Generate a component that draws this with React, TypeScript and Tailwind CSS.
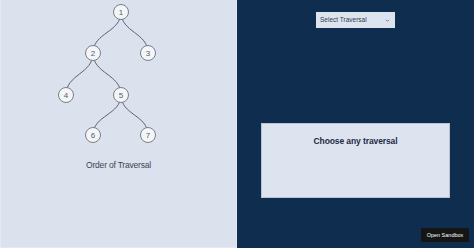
const nodes = [
  { id: 1, x: 121, y: 12 },
  { id: 2, x: 93, y: 53 },
  { id: 3, x: 148, y: 53 },
  { id: 4, x: 66, y: 95 },
  { id: 5, x: 121, y: 95 },
  { id: 6, x: 93, y: 135 },
  { id: 7, x: 148, y: 135 },
];

const links = [
  [1, 2],
  [1, 3],
  [2, 4],
  [2, 5],
  [5, 6],
  [5, 7],
];

const pos = (id: number) => nodes.find((n) => n.id === id)!;

// vertical diagonal link, like react-d3-tree
const diagonal = (a: number, b: number) => {
  const s = pos(a);
  const t = pos(b);
  const my = (s.y + t.y) / 2;
  return `M${s.x},${s.y} C${s.x},${my} ${t.x},${my} ${t.x},${t.y}`;
};

const Tree = () => (
  <svg width="237" height="146" className="block">
    {links.map(([a, b]) => (
      <path key={`${a}-${b}`} d={diagonal(a, b)} fill="none" stroke="#5a6272" strokeWidth="1" />
    ))}
    {nodes.map((n) => (
      <g key={n.id}>
        <circle cx={n.x} cy={n.y} r="7.5" fill="#f4f5f8" stroke="#7a7f88" strokeWidth="1" />
        <text
          x={n.x}
          y={n.y + 2.8}
          textAnchor="middle"
          fontSize="8"
          fill="#555b66"
          fontFamily="Liberation Sans, Arial, sans-serif"
        >
          {n.id}
        </text>
      </g>
    ))}
  </svg>
);

export default function App() {
  return (
    <div className="flex h-[248px] w-[474px] font-['Liberation_Sans',Arial,sans-serif]">
      <div className="w-[237px] bg-[#dbe2ee] border-x border-b border-[#e3e9f4] flex flex-col items-center">
        <Tree />
        <p className="mt-[13px] text-[8.5px] tracking-[-0.2px] text-[#3d4456]">Order of Traversal</p>
      </div>

      <div className="relative flex-1 bg-[#0f2d4f] flex flex-col items-center">
        <div className="mt-[12px] w-[79px] h-[16px] bg-[#dde4f0] flex items-center justify-between pl-[4px] pr-[5px]">
          <span className="text-[6.5px] text-[#333a48]">Select Traversal</span>
          <svg width="5" height="5" viewBox="0 0 10 10">
            <path d="M2 3.5 L5 6.5 L8 3.5" fill="none" stroke="#555" strokeWidth="1.4" />
          </svg>
        </div>

        <div className="mt-[95px] w-[189px] h-[75px] bg-[#dde4f0] border border-[#b9c3d4] flex flex-col items-center pt-[11px]">
          <h2 className="text-[8.5px] font-bold tracking-[-0.1px] text-[#1f2a44]">Choose any traversal</h2>
        </div>

        <button className="absolute right-[5px] bottom-[6px] w-[48px] h-[14px] bg-[#151515] text-white text-[5.5px] rounded-[1px]">
          Open Sandbox
        </button>
      </div>
    </div>
  );
}
